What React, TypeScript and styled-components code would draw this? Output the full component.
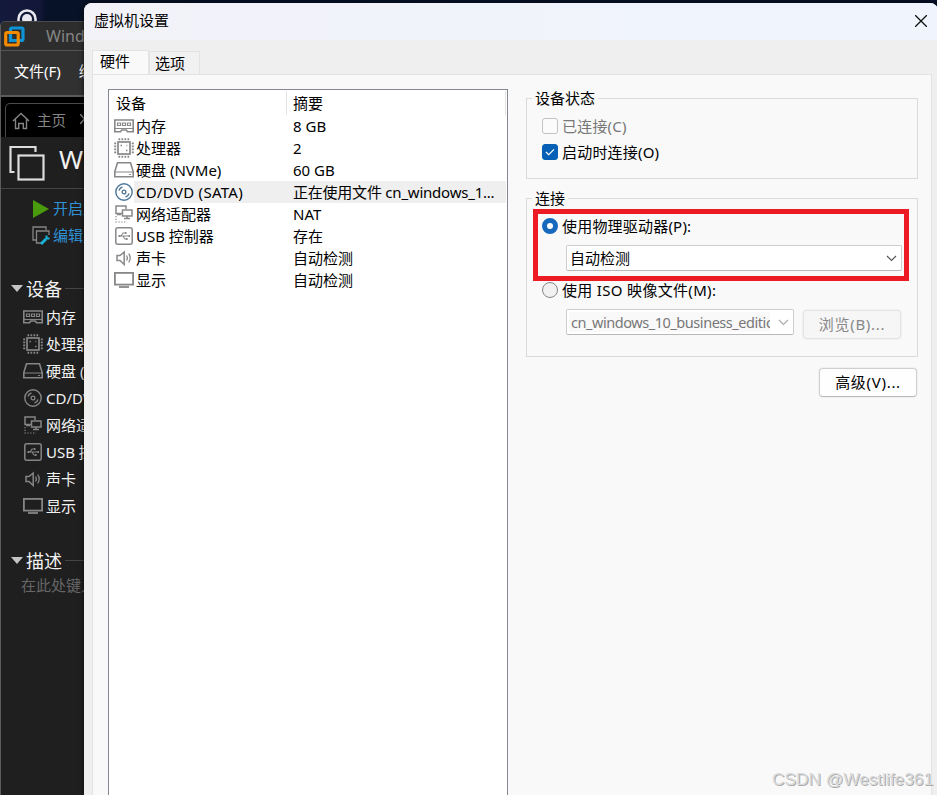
import React from 'react';
import styled, { createGlobalStyle } from 'styled-components';

const Global = createGlobalStyle`
  * { box-sizing: border-box; }
  body { margin: 0; overflow: hidden; background: #071127; }
  #root { font-family: "Noto Sans", "Noto Sans CJK SC", sans-serif; font-size: 15px; white-space: nowrap; }
`;

const Desktop = styled.main`
  position: relative; width: 937px; height: 795px; overflow: hidden;
  background: linear-gradient(90deg, #141a3b 0, #121738 40px, #071127 46px);
  display: flex; flex-direction: column;
`;
const DesktopStrip = styled.div`height: 21px; flex: none; padding-left: 17px; svg { display: block; }`;
const VmWindow = styled.div`
  flex: 1; width: 937px; background: #1f1f1f; color: #f2f2f2;
  border-left: 1px solid #5c5c5c; border-top: 1px solid #4a4a4a; border-top-left-radius: 5px;
  display: flex; flex-direction: column; overflow: hidden;
`;
const VmTitle = styled.div`
  height: 29px; background: #2d2d2d; display: flex; align-items: center; color: #858585; font-size: 16px;
  gap: 21px; padding-left: 3px; border-bottom: 1px solid #555;
`;
const VmMenu = styled.div`
  height: 46px; background: #313131; border-bottom: 2px solid #5c5c5c; display: flex; align-items: center;
  gap: 18px; padding: 0 0 5px 13px; color: #fff;
`;
const VmTabs = styled.div`height: 40px; background: #000; padding: 6px 0 0 4px;`;
const VmTab = styled.div`
  height: 34px; border: 1px solid #4b4b4b; border-bottom: 0; border-radius: 5px 0 0 0; display: flex; align-items: center;
  padding: 0 0 3px 6px; color: #858585; gap: 7px; font-size: 14.5px;
  svg:first-child { margin-top: 3px; }
  svg:last-child { margin-left: 7px; }
`;
const VmHeader = styled.div`
  height: 52px; border-bottom: 1px solid #444; display: flex; align-items: center; padding: 0 0 7px 6px;
  font-size: 26px; gap: 14px; svg { margin-top: 7px; }
`;
const VmActions = styled.div`padding: 6px 0 0 31px; height: 84px;`;
const VmAction = styled.div`
  height: 27px; display: flex; align-items: center; gap: 3px; color: #2f93d8;
  svg { flex: none; } span { margin-top: -2px; }
`;
const SectionHead = styled.div`
  height: 30px; display: flex; align-items: center; padding-left: 10px; gap: 3px; font-size: 18px;
  &::after { content: ""; flex: 1; height: 1px; background: #454545; }
`;
const DarkList = styled.div`height: 242px;`;
const DarkRow = styled.div`
  height: 27px; padding-left: 22px; display: flex; align-items: center; gap: 3px; color: #f2f2f2;
  svg { color: #858585; flex: none; }
`;
const Placeholder = styled.div`padding-left: 20px; color: #666; height: 22px; line-height: 20px;`;

const Dialog = styled.section`
  position: absolute; left: 84px; top: 3px; width: 854px; height: 792px; background: #efefef;
  border-radius: 8px 8px 0 0; display: flex; flex-direction: column; overflow: hidden; color: #000;
  box-shadow: 0 0 5px rgba(0, 0, 0, .7);
`;
const TitleBar = styled.header`
  height: 37px; flex: none; display: flex; justify-content: space-between; align-items: center;
  padding: 0 11px 3px 10px; background: linear-gradient(90deg, #f2f2f8, #eff4fd);
  span { margin-top: -2px; } svg { margin-top: 2px; }
`;
const TabStrip = styled.nav`height: 34px; flex: none; padding-left: 8px; display: flex; align-items: flex-end;`;
const Tab = styled.div<{ $active?: boolean }>`
  border: 1px solid #e3e3e3; border-bottom: 0; display: flex; padding-left: ${p => (p.$active ? 7 : 5)}px;
  width: ${p => (p.$active ? 57 : 51)}px; height: ${p => (p.$active ? 25 : 23)}px;
  background: ${p => (p.$active ? '#f9f9f9' : '#f1f1f1')}; line-height: ${p => (p.$active ? 20 : 22)}px;
  margin-bottom: ${p => (p.$active ? -1 : 0)}px;
`;
const Panel = styled.div`
  flex: 1; margin: 0 6px 0 8px; border: 1px solid #e3e3e3; border-bottom: 0; background: #f9f9f9;
  display: flex; align-items: stretch; padding: 14px 13px 0 15px; gap: 18px;
`;
const DeviceList = styled.div`width: 400px; flex: none; border: 1px solid #828790; border-bottom: 0; background: #fff; padding: 1px 1px 0;`;
const ListHeader = styled.div`
  height: 24px; display: grid; grid-template-columns: 177px 1fr; line-height: 24px;
  span { padding-left: 6px; border-right: 1px solid #e3e3e3; }
`;
const DeviceRow = styled.div<{ $selected?: boolean }>`
  height: 22px; display: grid; grid-template-columns: 24px 151px 1fr; align-items: center;
  svg { margin-left: 4px; display: block; }
  > span { height: 22px; line-height: 22px; padding-left: 2px; background: ${p => (p.$selected ? '#efefef' : 'transparent')}; }
  > span + span { padding-left: 8px; letter-spacing: ${p => (p.$selected ? '-.22px' : '0')}; }
  > span:nth-child(2) { letter-spacing: ${p => (p.$selected ? '.28px' : '0')}; }
  > div { color: ${p => (p.$selected ? '#4d7798' : '#888')}; }
`;
const Settings = styled.div`width: 392px; display: flex; flex-direction: column;`;
const Group = styled.fieldset<{ $h: number; $gap: number; $top?: number }>`
  margin: 0 0 ${p => p.$gap}px; padding: ${p => p.$top ?? 0}px 0 0; border: 1px solid #dadada; height: ${p => p.$h}px; min-width: 0;
`;
const Legend = styled.legend`margin-left: 5px; padding: 0 3px; height: 18px; line-height: 18px;`;
const Choice = styled.label<{ $disabled?: boolean }>`
  display: flex; align-items: center; gap: 4px; height: 26px; padding: 0 0 2px 15px; letter-spacing: .2px;
  color: ${p => (p.$disabled ? '#777' : '#000')};
`;
const Box = styled.span<{ $checked?: boolean }>`
  width: 16px; height: 16px; margin-top: 2px; border-radius: 3px; display: flex; align-items: center; justify-content: center;
  border: 1px solid ${p => (p.$checked ? '#0560b6' : '#c2c2c2')}; background: ${p => (p.$checked ? '#0560b6' : '#fbfbfb')};
`;
const Radio = styled.span<{ $checked?: boolean }>`
  width: 16px; height: 16px; margin-top: 2px; border-radius: 50%;
  border: ${p => (p.$checked ? '5px solid #1769bd' : '1px solid #868686')}; background: ${p => (p.$checked ? '#fff' : '#f1f1f1')};
`;
const Highlight = styled.div`
  width: 376px; height: 72px; margin: 0 0 0 6px; border: 5px solid #ed1c24; padding-left: 28px;
`;
const InnerChoice = styled(Choice)`margin-left: -28px; padding-left: 4px; height: 24px; margin-bottom: 7px;`;
const IsoChoice = styled(Choice)`height: 18px; letter-spacing: .32px;`;
const Combo = styled.div<{ $w: number; $disabled?: boolean }>`
  width: ${p => p.$w}px; height: 26px; border: 1px solid #cfcfcf; border-bottom-color: #b9b9b9; border-radius: 2px; background: #fff;
  display: flex; align-items: center; justify-content: space-between; padding: 0 4px 0 ${p => (p.$disabled ? 2 : 3)}px;
  color: ${p => (p.$disabled ? '#777' : '#000')};
  span { overflow: hidden; flex: none; line-height: 20px; ${p => (p.$disabled ? 'width: 201px; padding-left: 2px; background: #f9f9f9; font-size: 14.5px; letter-spacing: -.45px; margin-right: 6px;' : '')} }
`;
const IsoRow = styled.div`display: flex; gap: 8px; padding-left: 39px; margin-top: 10px;`;
const Button = styled.div<{ $disabled?: boolean }>`
  width: 98px; height: 29px; border: 1px solid ${p => (p.$disabled ? '#e4e4e4' : '#cfcfcf')}; border-radius: 4px;
  border-bottom-color: ${p => (p.$disabled ? '#e4e4e4' : '#b9b9b9')}; letter-spacing: .7px; padding-bottom: 3px;
  display: flex; align-items: center; justify-content: center; background: ${p => (p.$disabled ? '#f6f6f6' : '#fefefe')};
  color: ${p => (p.$disabled ? '#888' : '#000')}; box-shadow: 0 0 0 1px #f0f0f0;
  ${p => (p.$disabled ? 'margin: 1px 0 0 1px;' : 'align-self: flex-end; margin-right: 1px;')}
`;
const Watermark = styled.div`
  position: absolute; right: 4px; bottom: 6px; font: 17.25px "Liberation Sans", sans-serif; line-height: 20px;
  color: #dadada; text-shadow: 1px 1px 0 #ababab;
`;

type Kind = 'memory' | 'cpu' | 'disk' | 'disc' | 'network' | 'usb' | 'sound' | 'display';

const shapes: Record<Kind, React.ReactNode> = {
  memory: <>
    <path d="M.8 4h18.400v11.800h-5.700L12.300 14H7.700l-1.200 1.800H.8z" strokeWidth="1.600" />
    <path d="M3.500 7h3v2.500h-3zM8.500 7h3v2.500h-3zM13.500 7h3v2.500h-3z" strokeWidth="1.200" />
    <path d="M1 12.500h18" strokeWidth="1.200" />
  </>,
  cpu: <>
    <rect x="4" y="4" width="12" height="12" strokeWidth="1.700" />
    <path d="M4.500 1.200h12M4.500 18.800h12" strokeWidth="2" strokeDasharray="1.700 1.300" />
    <path d="M1.200 4.500v12M18.800 4.500v12" strokeWidth="2" strokeDasharray="1.700 1.300" />
    <path d="M6.500 7.500h1.500M12 12.500h1.500M12.500 7.500h.8" strokeWidth="1.500" />
  </>,
  disk: <>
    <path d="M3.500 2.800h13l2.700 8.700v5.300H.8v-5.300z" strokeWidth="1.600" />
    <path d="M1 12h18M15 14.500h2" strokeWidth="1.200" />
  </>,
  disc: <>
    <circle cx="10" cy="10" r="8.200" strokeWidth="1.400" />
    <circle cx="10" cy="10" r="1.900" strokeWidth="1.300" />
    <path d="M5 8.500A5 5 0 0 1 8.500 5M15 11.500A5 5 0 0 1 11.500 15" strokeWidth="1.400" />
  </>,
  network: <>
    <path d="M8 9.500H2V2h10v3" strokeWidth="1.500" />
    <path d="M8.500 6h9.500v6H8.500zM10 14.500h6M13 12v2M3 10.500h4" strokeWidth="1.500" />
    <path d="M2 12v6h11" strokeWidth="1.200" strokeDasharray="1.300 1.500" />
  </>,
  usb: <>
    <rect x="1.800" y="1.800" width="16.400" height="16.400" rx="2" strokeWidth="1.500" />
    <path d="M5 10h10M7 10l2-3h2.500M9 10l2 3h2.500" strokeWidth="1.100" />
    <path d="M4.500 10h2M11 7h1.500M12 13h1.500M14.500 10H16" strokeWidth="1.800" />
  </>,
  sound: <>
    <path d="M3 7.500h3L10.200 4v12.500L6 12.500H3z" strokeWidth="1.500" />
    <path d="M12.500 7.500q1.700 2.500 0 5M14.700 5.700q3 4.300 0 8.600" strokeWidth="1.300" />
  </>,
  display: <>
    <rect x=".9" y="2.900" width="18.200" height="11.700" strokeWidth="1.800" />
    <path d="M5 17h10" strokeWidth="1.800" />
  </>,
};

const DeviceIcon = ({ kind }: { kind: Kind }) => (
  <svg width="20" height="20" viewBox="0 0 20 20" fill="none" stroke="currentColor" strokeWidth="1">{shapes[kind]}</svg>
);

const Chevron = ({ color }: { color: string }) => (
  <svg width="11" height="8" viewBox="0 0 11 8" fill="none" stroke={color} strokeWidth="1.100"><path d="m1 2 4.500 4.500L10 2" /></svg>
);

const Caret = () => <svg width="12" height="7" viewBox="0 0 12 7"><path d="M0 0h12L6 7z" fill="#c4c4c4" /></svg>;

const devices: { kind: Kind; name: string; summary: string }[] = [
  { kind: 'memory', name: '内存', summary: '8 GB' },
  { kind: 'cpu', name: '处理器', summary: '2' },
  { kind: 'disk', name: '硬盘 (NVMe)', summary: '60 GB' },
  { kind: 'disc', name: 'CD/DVD (SATA)', summary: '正在使用文件 cn_windows_1...' },
  { kind: 'network', name: '网络适配器', summary: 'NAT' },
  { kind: 'usb', name: 'USB 控制器', summary: '存在' },
  { kind: 'sound', name: '声卡', summary: '自动检测' },
  { kind: 'display', name: '显示', summary: '自动检测' },
];

function MachineWindow() {
  return (
    <VmWindow>
      <VmTitle>
        <svg width="21" height="21" viewBox="0 0 21 21" fill="none" strokeWidth="3.200">
          <rect x="6.500" y="2" width="12.500" height="12.500" rx="1.500" stroke="#0d95d8" />
          <rect x="1.700" y="6.500" width="12.500" height="12.500" rx="1.500" stroke="#f38b00" />
          <path d="M6.500 9v5.500H11" stroke="#0d95d8" />
        </svg>
        <span>Windows</span>
      </VmTitle>
      <VmMenu><span>文件(F)</span><span>编辑(E)</span></VmMenu>
      <VmTabs>
        <VmTab>
          <svg width="18" height="18" viewBox="0 0 18 18" fill="none" stroke="#858585" strokeWidth="1.400"><path d="m1 9 8-7.500L17 9M3.500 7.500v9h3.200v-5h4.600v5h3.200v-9" /></svg>
          <span>主页</span>
          <svg width="9" height="10" viewBox="0 0 9 10" fill="none" stroke="#858585" strokeWidth="1.500"><path d="m0 0 9 10M9 0 0 10" /></svg>
        </VmTab>
      </VmTabs>
      <VmHeader>
        <svg width="38" height="38" viewBox="0 0 38 38" fill="none" stroke="#ddd" strokeWidth="2.200"><path d="M7.500 28H3.500V3h25v5" /><rect x="11.500" y="11.500" width="25" height="24" /></svg>
        <span>Windows</span>
      </VmHeader>
      <VmActions>
        <VmAction><svg width="18" height="18" viewBox="0 0 18 18"><path d="M1 0v18l16-9z" fill="#4a9a0d" /></svg><span>开启此虚拟机</span></VmAction>
        <VmAction>
          <svg width="18" height="20" viewBox="0 0 18 20" fill="none" stroke="#858585" strokeWidth="1.300"><path d="M4 14H1V1h13v3M9 17H4.500V5H17v4" /><path d="m9 18 5-5" stroke="#19b5d8" strokeWidth="2.800" /><path d="M17.500 12.500h-3v-3" stroke="#19b5d8" strokeWidth="2" /></svg>
          <span>编辑虚拟机设置</span>
        </VmAction>
      </VmActions>
      <SectionHead><Caret />设备</SectionHead>
      <DarkList>{devices.map(d => <DarkRow key={d.kind}><DeviceIcon kind={d.kind} /><span>{d.name}</span></DarkRow>)}</DarkList>
      <SectionHead><Caret />描述</SectionHead>
      <Placeholder>在此处键入对该虚拟机的描述。</Placeholder>
    </VmWindow>
  );
}

export default function App() {
  return (
    <Desktop>
      <Global />
      <DesktopStrip>
        <svg width="20" height="21" viewBox="0 0 20 21" fill="none" stroke="#e8e8ee"><path d="M1.500 21v-2a8.500 8.500 0 0 1 17 0v2" strokeWidth="2.500" /><circle cx="10" cy="19" r="5" fill="#e8e8ee" stroke="none" /></svg>
      </DesktopStrip>
      <MachineWindow />
      <Dialog>
        <TitleBar>
          <span>虚拟机设置</span>
          <svg width="12" height="12" viewBox="0 0 12 12" stroke="#111" strokeWidth="1.300"><path d="m0 0 12 12M12 0 0 12" /></svg>
        </TitleBar>
        <TabStrip><Tab $active>硬件</Tab><Tab>选项</Tab></TabStrip>
        <Panel>
          <DeviceList>
            <ListHeader><span>设备</span><span>摘要</span></ListHeader>
            {devices.map(d => (
              <DeviceRow key={d.kind} $selected={d.kind === 'disc'}>
                <div><DeviceIcon kind={d.kind} /></div><span>{d.name}</span><span>{d.summary}</span>
              </DeviceRow>
            ))}
          </DeviceList>
          <Settings>
            <Group $h={90} $gap={10} $top={6}>
              <Legend>设备状态</Legend>
              <Choice $disabled><Box />已连接(C)</Choice>
              <Choice>
                <Box $checked><svg width="10" height="8" viewBox="0 0 10 8" fill="none" stroke="#fff" strokeWidth="1.200"><path d="m1 4 2.700 2.700L9 1.300" /></svg></Box>
                启动时连接(O)
              </Choice>
            </Group>
            <Group $h={168} $gap={11} $top={2}>
              <Legend>连接</Legend>
              <Highlight>
                <InnerChoice><Radio $checked />使用物理驱动器(P):</InnerChoice>
                <Combo $w={336}><span>自动检测</span><Chevron color="#555" /></Combo>
              </Highlight>
              <IsoChoice><Radio />使用 ISO 映像文件(M):</IsoChoice>
              <IsoRow>
                <Combo $w={228} $disabled><span>cn_windows_10_business_editions</span><Chevron color="#aaa" /></Combo>
                <Button $disabled>浏览(B)...</Button>
              </IsoRow>
            </Group>
            <Button>高级(V)...</Button>
          </Settings>
        </Panel>
      </Dialog>
      <Watermark>CSDN @Westlife361</Watermark>
    </Desktop>
  );
}
